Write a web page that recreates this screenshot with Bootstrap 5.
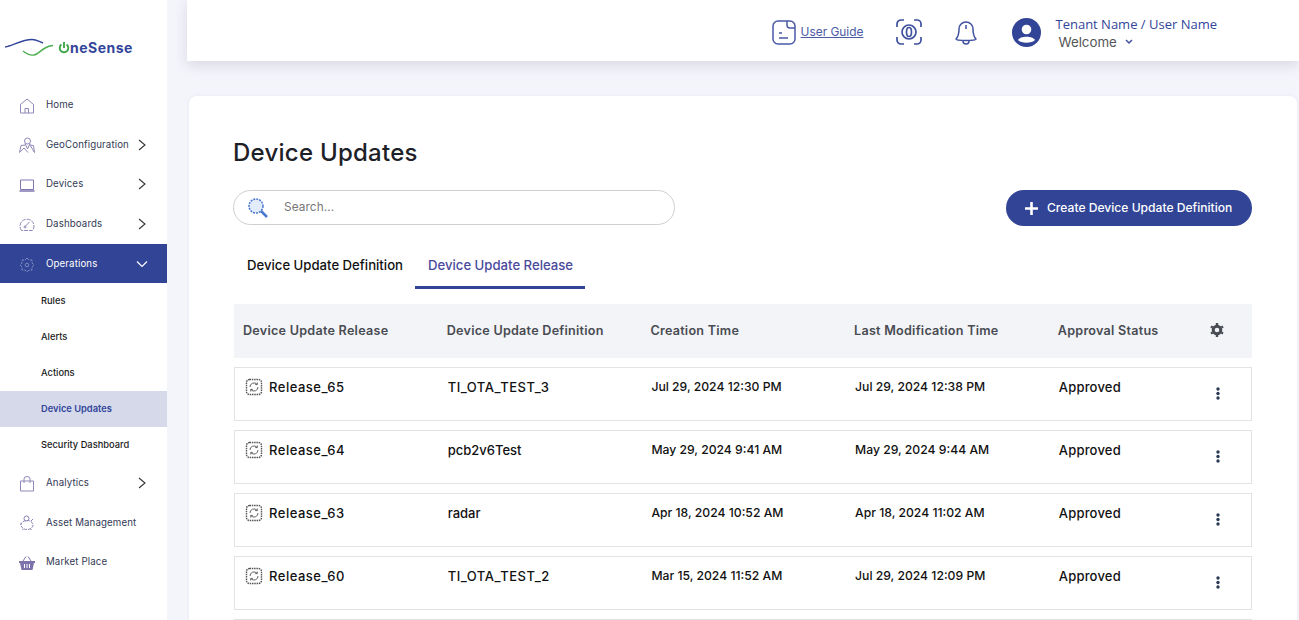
<!DOCTYPE html>
<html lang="en">
<head>
<meta charset="UTF-8">
<meta name="viewport" content="width=device-width, initial-scale=1.0">
<title>Device Updates</title>
<link href="https://cdn.jsdelivr.net/npm/bootstrap@5.3.1/dist/css/bootstrap.min.css" rel="stylesheet">
<style>
html,body{height:620px;overflow:hidden;}
body{background:#f4f5fb;font-family:Inter,"Liberation Sans",sans-serif;color:#111;}
.side-bar{width:167px;height:620px;background:#fff;flex:none;}
.logo-box{height:85px;padding:38px 0 0 5px;}
.logo-name{font-size:14px;font-weight:700;color:#32459a;line-height:1;letter-spacing:.5px;}
.side-item{height:39.5px;padding:2px 0 0 19px;font-size:9.7px;color:#333a55;letter-spacing:.12px;}
.side-item svg.ico{width:16px;height:16px;margin-right:11px;flex:none;}
.side-item .chev{position:absolute;left:136px;top:14px;width:11px;height:12px;}
.side-item.open{background:#324496;color:#fff;height:39px;margin-top:1px;}
.side-item.open .chev{width:12px;}
.side-sub{height:36px;padding-left:41px;font-size:9.3px;font-weight:500;color:#1b1b1b;}
.side-sub.on{background:#d5d9ea;color:#32459a;font-weight:600;}
.top-bar{height:61px;margin-left:20px;background:#fff;box-shadow:0 4px 12px rgba(40,45,70,.14);padding:3px 82px 0 0;}
.guide-link{font-size:11.9px;color:#4a5aa5;margin:0 33px 0 5px;}
.icon-zero{margin-right:32px;}
.icon-bell{margin-right:34px;}
.icon-user{margin-right:14px;}
.user-name{font-family:"Open Sans",sans-serif;font-size:13px;color:#32459a;line-height:17px;margin-top:2px;}
.user-role{font-size:13.3px;color:#555;line-height:17px;padding-left:3px;margin-top:1px;}
.main-card{margin:35px 2px 0 22px;background:#fff;border-radius:8px 8px 0 0;height:524px;overflow:hidden;padding:42px 45px 0 44px;box-shadow:0 0 4px rgba(40,45,70,.05);}
.page-title{font-size:24px;font-weight:500;letter-spacing:.25px;color:#1d2127;line-height:30px;margin:0 0 22px;}
.search-box{width:442px;height:35px;border:1px solid #cfcfcf;border-radius:18px;padding-left:13px;font-size:11.8px;color:#777;letter-spacing:.1px;}
.search-box svg{margin-right:15px;}
.btn-create{height:36px;width:246px;background:#324496;color:#fff;border-radius:18px;font-size:12.1px;font-weight:500;border:0;padding:0 0 0 19px;}
.btn-create:hover{background:#324496;color:#fff;}
.btn-create svg{margin-right:9px;}
.tab-strip{margin-top:22px;height:41px;padding-left:1px;}
.tab-item{padding:0 12px 0 13px;font-size:13.15px;font-weight:500;color:#111;height:41px;line-height:35px;}
.tab-item.on{color:#4a4a9c;border-bottom:3px solid #324496;}
.data-grid{margin-left:1px;}
.grid-head,.grid-row{display:grid;grid-template-columns:repeat(4,203.7px) 152px 1fr;align-items:start;}
.grid-head{margin-top:15px;height:54px;background:#f3f4f8;padding:18px 0 0 9px;font-size:12.6px;font-weight:600;letter-spacing:.25px;color:#484b52;line-height:17px;}
.grid-row{height:54px;margin-top:9px;border:1px solid #e3e3e3;padding:9px 0 0 9px;font-size:12.2px;font-weight:500;color:#111;line-height:20px;}
.first-cell{display:flex;align-items:center;gap:6px;padding-left:1px;}
.cell-wide{font-size:13px;}
.cell-under{font-size:13px;letter-spacing:.5px;}
.cell-status{font-size:13px;letter-spacing:.2px;}
.dots-cell{padding:6px 0 0 5px;}
.gear-cell{margin-top:-2px;}
</style>
</head>
<body>
<div class="d-flex">
  <aside class="side-bar">
    <div class="logo-box d-flex align-items-start">
      <div class="d-flex align-items-center">
        <svg width="53" height="20" viewBox="0 0 53 20" fill="none" stroke-width="1.400"><path d="M0 9C8 7.500 17 1.500 27 1.500C31 1.500 34 3.500 38 5" stroke="#32459a"/><path d="M18 13C21 15.500 25 17.500 29 17C35 16 37 8.500 48 7.500" stroke="#4cae4f"/></svg>
        <svg width="12" height="12" viewBox="0 0 14 14"><path d="M4 3A5 5 0 1 0 10 3" fill="none" stroke="#3fa648" stroke-width="2.200"/><path d="M7 0V7" stroke="#3fa648" stroke-width="2.200"/></svg>
        <span class="logo-name">neSense</span>
      </div>
    </div>
    <nav>
      <div class="side-item d-flex align-items-center position-relative"><svg class="ico" viewBox="0 0 16 16" fill="none" stroke="#9088b8"><path d="M1.500 6.500L8 1L14.500 6.500V15H1.500Z"/><path d="M6 15V10.500H9.500V15"/></svg>Home</div>
      <div class="side-item d-flex align-items-center position-relative"><svg class="ico" viewBox="0 0 16 16" fill="none" stroke="#9088b8"><circle cx="8.500" cy="4" r="3"/><path d="M8.500 12L6 6.500M8.500 12L11 6.500"/><path d="M.5 15.500L2 8.500L6 8M11 8L14.500 8.500L15.500 15.500Z"/><path d="M.5 15.500L5 11L9 15.500"/></svg>GeoConfiguration<svg class="chev" viewBox="0 0 11 12" fill="none" stroke="#333" stroke-width="1.100"><path d="M3 1L9 6L3 11"/></svg></div>
      <div class="side-item d-flex align-items-center position-relative"><svg class="ico" viewBox="0 0 16 16" fill="none" stroke="#8077b0"><path d="M1.500 3H14.500V12.500H1.500Z"/><path d="M.5 14H15.500" stroke-width="1.500"/></svg>Devices<svg class="chev" viewBox="0 0 11 12" fill="none" stroke="#333" stroke-width="1.100"><path d="M3 1L9 6L3 11"/></svg></div>
      <div class="side-item d-flex align-items-center position-relative"><svg class="ico" viewBox="0 0 16 16" fill="none" stroke="#9088b8"><path d="M2.500 14.500A7 7 0 1 1 13.500 14.500Z" stroke-dasharray="4 1"/><path d="M6 10.500L10.500 6"/><circle cx="6" cy="11" r="1"/></svg>Dashboards<svg class="chev" viewBox="0 0 11 12" fill="none" stroke="#333" stroke-width="1.100"><path d="M3 1L9 6L3 11"/></svg></div>
      <div class="side-item open d-flex align-items-center position-relative"><svg class="ico" viewBox="0 0 16 16" fill="none" stroke="#7f88c0" stroke-dasharray="3 1"><path d="M8 1L10 3H13V6L15 8L13 10V13H10L8 15L6 13H3V10L1 8L3 6V3H6Z"/><circle cx="8" cy="8" r="1.800" stroke-dasharray="none"/></svg>Operations<svg class="chev" viewBox="0 0 12 11" fill="none" stroke="#fff" stroke-width="1.200"><path d="M1 3L6 8L11 3"/></svg></div>
      <div class="side-sub d-flex align-items-center">Rules</div>
      <div class="side-sub d-flex align-items-center">Alerts</div>
      <div class="side-sub d-flex align-items-center">Actions</div>
      <div class="side-sub on d-flex align-items-center">Device Updates</div>
      <div class="side-sub d-flex align-items-center">Security Dashboard</div>
      <div class="side-item d-flex align-items-center position-relative"><svg class="ico" viewBox="0 0 16 16" fill="none" stroke="#9088b8"><path d="M1.500 5H14.500V15H1.500Z"/><path d="M5 7V3A3 2.500 0 0 1 11 3V7"/></svg>Analytics<svg class="chev" viewBox="0 0 11 12" fill="none" stroke="#333" stroke-width="1.100"><path d="M3 1L9 6L3 11"/></svg></div>
      <div class="side-item d-flex align-items-center position-relative"><svg class="ico" viewBox="0 0 16 16" fill="none" stroke="#8880b2"><ellipse cx="8" cy="10" rx="6" ry="4.500" stroke-dasharray="3 1"/><circle cx="7.500" cy="3.500" r="2.500"/><path d="M12 6L14 4M1 9H2M4 15V14M12 15V14"/></svg>Asset Management</div>
      <div class="side-item d-flex align-items-center position-relative"><svg class="ico" viewBox="0 0 16 16" fill="#7c74aa"><path d="M0 6H16V8H15L13.500 15H2.500L1 8H0Z"/><path d="M4 6L7 1.500M12 6L9 1.500" stroke="#7c74aa" fill="none"/><path d="M5.500 9V13M8 9V13M10.500 9V13" stroke="#fff" fill="none"/></svg>Market Place</div>
    </nav>
  </aside>
  <div class="flex-grow-1">
    <header class="top-bar d-flex align-items-center justify-content-end">
      <svg width="24" height="25" viewBox="0 0 24 25" fill="none" stroke="#4a5aa5" stroke-width="1.500"><rect x="1" y="1" width="22" height="23" rx="5"/><path d="M15 1V5A3 3 0 0 0 18 8H23"/><path d="M7 13H10M7 18H16"/></svg>
      <a href="#" class="guide-link">User Guide</a>
      <svg width="26" height="26" viewBox="0 0 26 26" fill="none" stroke="#3f519f" stroke-width="1.700" class="icon-zero"><path d="M1 8V5A4 4 0 0 1 5 1H8M18 1H21A4 4 0 0 1 25 5V8M25 18V21A4 4 0 0 1 21 25H18M8 25H5A4 4 0 0 1 1 21V18"/><circle cx="13" cy="13" r="7"/><ellipse cx="13" cy="13" rx="2.500" ry="4.500"/></svg>
      <svg width="24" height="26" viewBox="0 0 24 26" fill="none" stroke="#3f519f" stroke-width="1.500" class="icon-bell"><path d="M2 20C5 17 5 14 5 10A7 7 0 0 1 19 10C19 14 19 17 22 20C22 22 2 22 2 20Z"/><path d="M9 22A3 3 0 0 0 15 22M12 6V10"/></svg>
      <svg width="29" height="29" viewBox="0 0 29 29" class="icon-user"><circle cx="14.500" cy="14.500" r="14.500" fill="#324496"/><circle cx="14.500" cy="11.500" r="4.800" fill="#fff"/><path d="M6 22C8 17.500 21 17.500 23 22C20 25.500 9 25.500 6 22Z" fill="#fff"/></svg>
      <div>
        <div class="user-name">Tenant Name / User Name</div>
        <div class="user-role d-flex align-items-center">Welcome<svg width="8" height="6" viewBox="0 0 8 6" fill="none" stroke="#3f519f" stroke-width="1.500" class="ms-2"><path d="M1 1L4 4L7 1"/></svg></div>
      </div>
    </header>
    <main class="main-card">
      <h1 class="page-title">Device Updates</h1>
      <div class="d-flex justify-content-between align-items-start">
        <div class="search-box d-flex align-items-center">
          <svg width="22" height="22" viewBox="0 0 22 22" fill="none"><circle cx="9" cy="9" r="7" fill="#e3ecfa" stroke="#4a78d0" stroke-width="1.500" stroke-dasharray="2 1"/><path d="M14 14L20 20" stroke="#4a78d0" stroke-width="2.500"/></svg>
          <span>Search...</span>
        </div>
        <button class="btn btn-create d-flex align-items-center" type="button">
          <svg width="13" height="13" viewBox="0 0 13 13"><path d="M6.500 0V13M0 6.500H13" stroke="#fff" stroke-width="2.600"/></svg>
          Create Device Update Definition
        </button>
      </div>
      <div class="tab-strip d-flex">
        <div class="tab-item">Device Update Definition</div>
        <div class="tab-item on">Device Update Release</div>
      </div>
      <div class="data-grid">
        <div class="grid-head">
          <div>Device Update Release</div><div>Device Update Definition</div><div>Creation Time</div><div>Last Modification Time</div><div>Approval Status</div>
          <div class="gear-cell"><svg width="14" height="14" viewBox="0 0 14 14"><circle cx="7" cy="7" r="3.800" fill="none" stroke="#484b52" stroke-width="3"/><path d="M7 0V14M.9 3.500L13.100 10.500M13.100 3.500L.9 10.500" stroke="#484b52" stroke-width="2.400" stroke-dasharray="2 10 2"/></svg></div>
        </div>
        <div id="rows"></div>
      </div>
    </main>
  </div>
</div>
<script>
// table rows
const rows = [
  ['Release_65', 'TI_OTA_TEST_3', 'Jul 29, 2024 12:30 PM', 'Jul 29, 2024 12:38 PM'],
  ['Release_64', 'pcb2v6Test', 'May 29, 2024 9:41 AM', 'May 29, 2024 9:44 AM'],
  ['Release_63', 'radar', 'Apr 18, 2024 10:52 AM', 'Apr 18, 2024 11:02 AM'],
  ['Release_60', 'TI_OTA_TEST_2', 'Mar 15, 2024 11:52 AM', 'Jul 29, 2024 12:09 PM'],
  ['', '', '', '']
];
const chip = '<svg width="18" height="18" viewBox="0 0 18 18" fill="none" stroke="#555"><rect x="1.500" y="1.500" width="15" height="15" rx="3" stroke-width="1.400" stroke-dasharray="1.500 .8"/><path d="M5 9A4 4 0 0 1 12 6.300M13 9A4 4 0 0 1 6 11.700M12.300 4.500V6.600H10.200M5.700 13.500V11.400H7.800" stroke-width=".9"/></svg>';
const dots = '<svg width="4" height="13" viewBox="0 0 4 13" fill="#2b3a55"><circle cx="2" cy="2" r="1.700"/><circle cx="2" cy="6.500" r="1.700"/><circle cx="2" cy="11" r="1.700"/></svg>';
document.getElementById('rows').innerHTML = rows.map(r => r[0] ? `<div class="grid-row">
  <div class="first-cell">${chip}<span class="cell-under">${r[0]}</span></div><div class="${r[1].includes('_') ? 'cell-under' : 'cell-wide'}">${r[1]}</div><div>${r[2]}</div><div>${r[3]}</div><div class="cell-status">Approved</div>
  <div class="dots-cell">${dots}</div></div>` : '<div class="grid-row"></div>').join('');
</script>
<script src="https://cdn.jsdelivr.net/npm/bootstrap@5.3.1/dist/js/bootstrap.bundle.min.js"></script>
</body>
</html>
